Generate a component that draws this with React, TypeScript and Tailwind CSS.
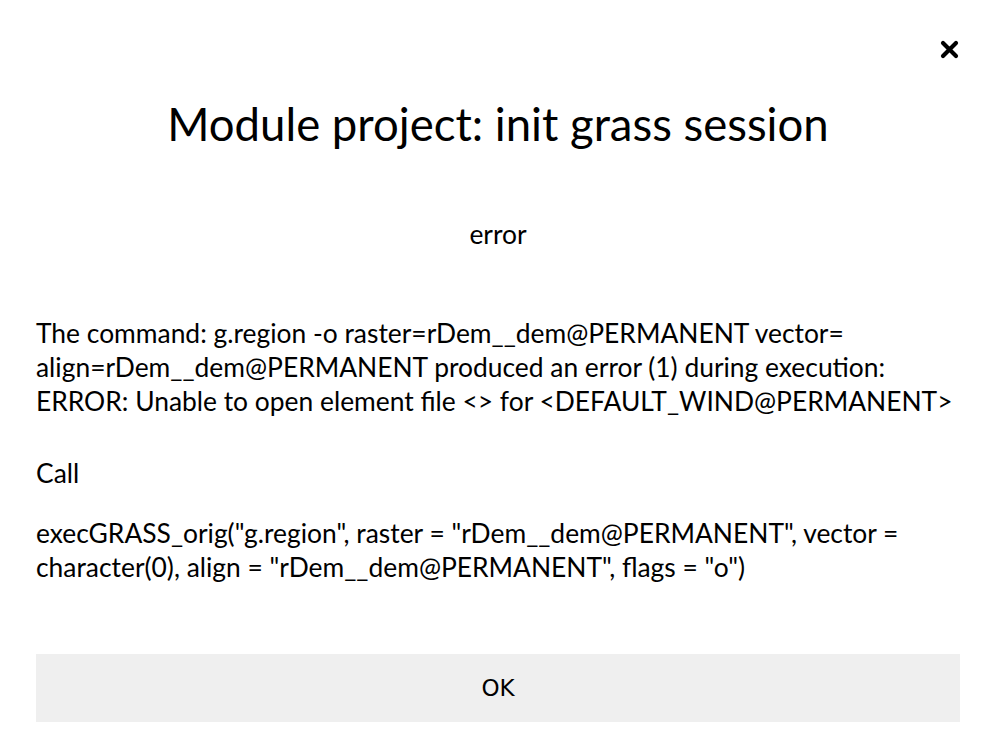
import React from "react";

export default function App() {
  return (
    <div className="relative w-[996px] h-[750px] bg-white text-black" style={{ fontFamily: "Lato, 'Noto Sans', sans-serif" }}>
      <button className="absolute left-[940px] top-[40px] w-[19px] h-[19px] flex items-center justify-center">
        <svg width="19" height="19" viewBox="0 0 19 19">
          <path d="M3 3 L16 16 M16 3 L3 16" stroke="#000" strokeWidth="4.2" strokeLinecap="round" />
        </svg>
      </button>
      <div className="flex flex-col px-[36px]">
        <h1 className="mt-[96px] text-center text-[45.5px] leading-[56px] font-normal">Module project: init grass session</h1>
        <p className="mt-[65px] text-center text-[26.4px] leading-[34px]">error</p>
        <p className="mt-[65px] text-[26.4px] leading-[34px]">
          The command: g.region -o raster=rDem__dem@PERMANENT vector= align=rDem__dem@PERMANENT produced an error (1) during execution: ERROR: Unable to open element file &lt;&gt; for &lt;DEFAULT_WIND@PERMANENT&gt;
        </p>
        <p className="mt-[38px] text-[26.4px] leading-[34px]">Call</p>
        <p className="mt-[26px] text-[26.4px] leading-[34px]">
          execGRASS_orig("g.region", raster = "rDem__dem@PERMANENT", vector = character(0), align = "rDem__dem@PERMANENT", flags = "o")
        </p>
        <button className="mt-[70px] h-[68px] w-full bg-[#efefef] text-[23px] text-black" style={{ fontFamily: "'DejaVu Sans', sans-serif" }}>OK</button>
      </div>
    </div>
  );
}
